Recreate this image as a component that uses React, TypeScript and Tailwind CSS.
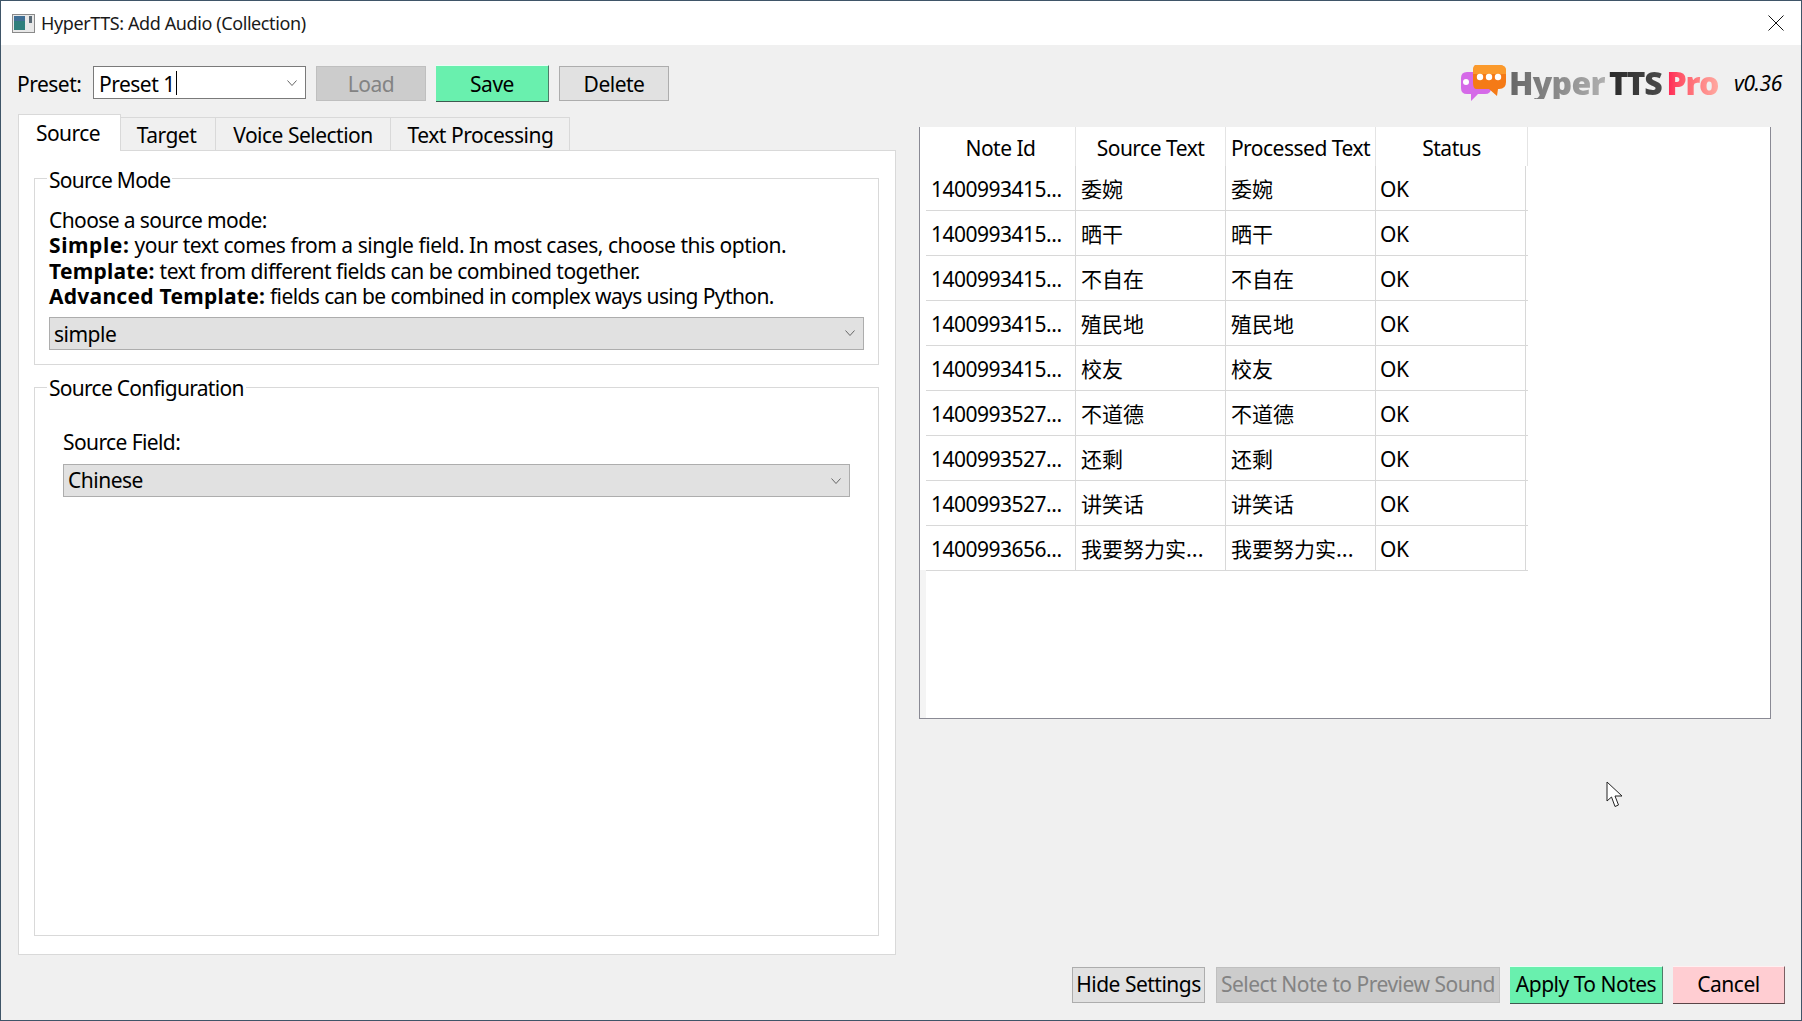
import React from "react";

const font = '"Noto Sans", "Noto Sans CJK SC", sans-serif';
const cjk = '"Noto Sans CJK SC", sans-serif';
const logoFont = '"Open Sans", sans-serif';

const rows = [
  ["1400993415...", "委婉"],
  ["1400993415...", "晒干"],
  ["1400993415...", "不自在"],
  ["1400993415...", "殖民地"],
  ["1400993415...", "校友"],
  ["1400993527...", "不道德"],
  ["1400993527...", "还剩"],
  ["1400993527...", "讲笑话"],
  ["1400993656...", "我要努力实..."],
];

function Chevron() {
  return (
    <svg width="10" height="6" viewBox="0 0 10 6" className="shrink-0" fill="none">
      <path d="M0.5 0.5 L5 5.5 L9.5 0.5" stroke="#666" strokeWidth="1" />
    </svg>
  );
}

function Combo({ label, textCls }: { label: string; textCls: string }) {
  return (
    <div className="flex h-[33px] items-center justify-between border border-[#adadad] bg-[#e1e1e1] pl-[4px] pr-[8px]">
      <span className={"text-[21px] leading-none tracking-[-0.5px] " + textCls}>{label}</span>
      <Chevron />
    </div>
  );
}

function Btn({ label, cls }: { label: string; cls: string }) {
  return (
    <div className={"flex shrink-0 items-center justify-center text-[21px] leading-none tracking-[-0.5px] " + cls}>{label}</div>
  );
}

function Logo() {
  return (
    <div className="flex items-center">
      <svg width="46" height="38" viewBox="0 0 46 38" className="shrink-0">
        <path d="M6 8 H24 Q30 8 30 14 V24 Q30 30 24 30 H17 L10 37 L10 30 H6 Q0 30 0 24 V14 Q0 8 6 8Z" fill="#d56ae8" />
        <path d="M15 1 H38 Q45 1 45 8 V18 Q45 25 38 25 H37 L36 32 L28 25 H15 Q12 25 12 18 V8 Q12 1 15 1Z" fill="#f57a16" />
        <path d="M15 1 H38 Q45 1 45 6 V10 H12 V8 Q12 1 15 1Z" fill="#fb9a2c" />
        <circle cx="5" cy="18" r="3" fill="#fff" />
        <circle cx="19" cy="13" r="3.2" fill="#fff" />
        <circle cx="28" cy="13" r="3.2" fill="#fff" />
        <circle cx="37" cy="13" r="3.2" fill="#fff" />
      </svg>
      <span
        className="ml-[2px] bg-gradient-to-r from-[#666666] to-[#b0b0b0] bg-clip-text text-[32px] font-extrabold leading-none tracking-[-0.7px] text-transparent"
        style={{ fontFamily: logoFont }}
      >
        Hyper
      </span>
      <span
        className="ml-[4px] bg-gradient-to-r from-[#2a2a2a] to-[#4a4a4a] bg-clip-text text-[32px] font-extrabold leading-none tracking-[-1.2px] text-transparent"
        style={{ fontFamily: logoFont }}
      >
        TTS
      </span>
      <span
        className="ml-[5px] bg-gradient-to-r from-[#ff1f55] to-[#ffa8a0] bg-clip-text text-[32px] font-extrabold leading-none tracking-[-1.4px] text-transparent"
        style={{ fontFamily: logoFont }}
      >
        Pro
      </span>
    </div>
  );
}

export default function App() {
  return (
    <div
      className="relative flex h-[1021px] w-[1802px] flex-col overflow-hidden border border-[#3f5568] bg-[#f0f0f0] text-black"
      style={{ fontFamily: font }}
    >
      {/* Title bar */}
      <div className="flex h-[44px] shrink-0 items-center bg-white pl-[11px] pr-[17px]">
        <svg width="23" height="19" viewBox="0 0 23 19" className="shrink-0">
          <rect x="0.5" y="0.5" width="22" height="18" fill="#e8e8e8" stroke="#8a8a8a" />
          <rect x="2" y="2" width="11" height="14" fill="#2f7f7c" />
          <rect x="2" y="2" width="11" height="5" fill="#3f6f95" />
          <rect x="17" y="2" width="3" height="7" fill="#5a6a75" />
        </svg>
        <span className="ml-[6px] text-[18px] leading-none tracking-[-0.4px] text-[#1a1a1a]">HyperTTS: Add Audio (Collection)</span>
        <svg width="16" height="16" viewBox="0 0 16 16" className="ml-auto shrink-0" fill="none">
          <path d="M0.5 0.5 L15.5 15.5 M15.5 0.5 L0.5 15.5" stroke="#111" strokeWidth="1" />
        </svg>
      </div>

      {/* Preset toolbar */}
      <div className="flex h-[69px] shrink-0 items-start pl-[16px] pr-[18px] pt-[21px]">
        <span className="mt-[8px] w-[76px] text-[21px] leading-none tracking-[-0.5px]">Preset:</span>
        <div className="flex h-[33px] w-[213px] shrink-0 items-center justify-between border border-[#7a7a7a] bg-white pl-[5px] pr-[8px]">
          <span className="flex items-center pt-[3px] text-[21px] leading-none tracking-[-0.5px]">
            Preset 1<span className="ml-[1px] inline-block h-[24px] w-px -translate-y-[1px] bg-black" />
          </span>
          <Chevron />
        </div>
        <Btn label="Load" cls="ml-[10px] h-[35px] w-[110px] border border-[#bfbfbf] bg-[#cccccc] pt-[2px] text-[#838383]" />
        <Btn label="Save" cls="ml-[10px] -mt-px h-[37px] w-[113px] border-b border-r border-b-[#3f5a50] border-r-[#4f7a68] border-t border-t-[#e8fff4] bg-[#69f0ae] pt-[2px]" />
        <Btn label="Delete" cls="ml-[10px] h-[35px] w-[110px] border border-[#adadad] bg-[#e1e1e1] pt-[2px]" />
        <div className="-mt-[2px] ml-auto flex items-center">
          <Logo />
          <span className="ml-[16px] mr-[1px] text-[21px] italic leading-none tracking-[-0.38px]">v0.36</span>
        </div>
      </div>

      {/* Body */}
      <div className="flex min-h-0 flex-1 pl-[17px] pr-[30px]">
        {/* Left: tabs */}
        <div className="flex w-[878px] shrink-0 flex-col">
          <div className="relative z-10 flex h-[37px] shrink-0 items-end">
            <div className="flex h-[37px] w-[103px] items-center justify-center border border-b-0 border-[#d9d9d9] bg-white pr-[3px] text-[21px] leading-none tracking-[-0.55px]">Source</div>
            <div className="mb-px flex h-[33px] w-[95px] items-center justify-center border-b-0 border-r border-t border-[#d9d9d9] bg-[#f0f0f0] pr-[3px] pt-[2px] text-[21px] leading-none tracking-[-0.5px]">Target</div>
            <div className="mb-px flex h-[33px] w-[175px] items-center justify-center border-b-0 border-r border-t border-[#d9d9d9] bg-[#f0f0f0] pt-[2px] text-[21px] leading-none tracking-[-0.5px]">Voice Selection</div>
            <div className="mb-px flex h-[33px] w-[179px] items-center justify-center border-b-0 border-r border-t border-[#d9d9d9] bg-[#f0f0f0] pl-[1px] pt-[2px] text-[21px] leading-none tracking-[-0.45px]">Text Processing</div>
          </div>
          <div className="-mt-px flex min-h-0 flex-1 flex-col border border-[#d9d9d9] bg-white pb-[18px] pl-[15px] pr-[16px] pt-[15px]">
            <fieldset className="h-[199px] shrink-0 border border-[#d9d9d9]">
              <legend className="ml-[12px] px-[2px] text-[21px] leading-[25px] tracking-[-0.72px]">
                <span className="relative top-[2px]">Source Mode</span>
              </legend>
              <div className="px-[14px]">
                <div className="mt-[17px] text-[21px] leading-[25.4px] tracking-[-0.6px]">
                  <div>Choose a source mode:</div>
                  <div className="tracking-[-0.47px]"><b className="tracking-[0.6px]">Simple:</b> your text comes from a single field. In most cases, choose this option.</div>
                  <div className="tracking-[-0.54px]"><b className="tracking-[0.26px]">Template:</b> text from different fields can be combined together.</div>
                  <div><b className="tracking-[0.26px]">Advanced Template:</b> fields can be combined in complex ways using Python.</div>
                </div>
                <div className="mt-[7px]"><Combo label="simple" textCls="pt-[2px]" /></div>
              </div>
            </fieldset>
            <fieldset className="mt-[10px] min-h-0 flex-1 border border-[#d9d9d9]">
              <legend className="ml-[12px] px-[2px] text-[21px] leading-[25px] tracking-[-0.72px]">
                <span className="relative top-[1px]">Source Configuration</span>
              </legend>
              <div className="px-[28px]">
                <div className="mt-[30px] text-[21px] leading-[25px] tracking-[-0.6px]">Source Field:</div>
                <div className="mt-[9px]"><Combo label="Chinese" textCls="" /></div>
              </div>
            </fieldset>
          </div>
        </div>

        {/* Right: table */}
        <div className="ml-[23px] mt-[13px] flex h-[592px] min-w-0 flex-1 border-b border-l border-r border-[#8a8a94] bg-white">
          <div className="flex w-[6px] shrink-0 flex-col">
            <div className="h-[443px] bg-white" />
            <div className="flex-1 bg-[#f4f4f4]" />
          </div>
          <div className="w-[602px] text-[21px] tracking-[-0.5px]">
            <div className="grid h-[39px] grid-cols-[150px_150px_150px_152px]">
              {["Note Id", "Source Text", "Processed Text", "Status"].map((h) => (
                <div key={h} className="flex items-center justify-center whitespace-nowrap border-r border-[#e4e4e4] pt-[4px] leading-none">{h}</div>
              ))}
            </div>
            {rows.map((r, i) => (
              <div key={i} className="grid h-[45px] grid-cols-[150px_150px_150px_150px] border-b border-[#d8d8d8]">
                <div className="flex items-center whitespace-nowrap border-r border-[#d8d8d8] pl-[5px] pt-[3px] leading-none">{r[0]}</div>
                <div className="flex items-center whitespace-nowrap border-r border-[#d8d8d8] pl-[5px] text-[21px] leading-none tracking-[0px]" style={{ fontFamily: cjk }}>{r[1]}</div>
                <div className="flex items-center whitespace-nowrap border-r border-[#d8d8d8] pl-[5px] text-[21px] leading-none tracking-[0px]" style={{ fontFamily: cjk }}>{r[1]}</div>
                <div className="flex items-center border-r border-[#d8d8d8] pl-[4px] pt-[3px] leading-none">OK</div>
              </div>
            ))}
          </div>
        </div>
      </div>

      {/* Footer buttons */}
      <div className="flex h-[65px] shrink-0 items-start justify-end pr-[16px] pt-[11px]">
        <Btn label="Hide Settings" cls="mt-px h-[36px] w-[133px] border border-[#adadad] bg-[#e1e1e1] pb-[1px]" />
        <Btn label="Select Note to Preview Sound" cls="ml-[11px] mt-px h-[36px] w-[284px] border border-[#bfbfbf] bg-[#cccccc] pb-[1px] text-[#838383]" />
        <Btn label="Apply To Notes" cls="ml-[10px] h-[38px] w-[153px] border-b border-r border-t border-b-[#3f5a50] border-r-[#4f7a68] border-t-[#e8fff4] bg-[#69f0ae] pb-[1px]" />
        <Btn label="Cancel" cls="ml-[10px] h-[38px] w-[112px] border-b border-r border-t border-b-[#5a4548] border-r-[#7a5f62] border-t-[#fff0f2] bg-[#ffcdd2] pb-[1px]" />
      </div>

      {/* Mouse pointer */}
      <svg width="18" height="27" viewBox="0 0 18 27" className="absolute left-[1605px] top-[780px]">
        <path d="M1 1 L1 20 L5.5 16 L9 25.5 L12.5 24 L9 15 L16 15 Z" fill="#fff" stroke="#222" strokeWidth="1" />
      </svg>
    </div>
  );
}
